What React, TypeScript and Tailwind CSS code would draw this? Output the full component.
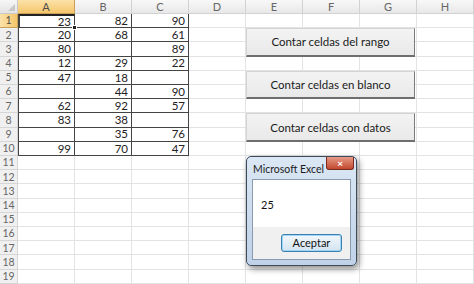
import { Fragment } from "react";

const cols = ["A", "B", "C", "D", "E", "F", "G", "H"];

const data: (number | null)[][] = [
  [23, 82, 90],
  [20, 68, 61],
  [80, null, 89],
  [12, 29, 22],
  [47, 18, null],
  [null, 44, 90],
  [62, 92, 57],
  [83, 38, null],
  [null, 35, 76],
  [99, 70, 47],
];

const buttons = [
  { label: "Contar celdas del rango", row: "row-start-3 row-end-5" },
  { label: "Contar celdas en blanco", row: "row-start-6 row-end-8" },
  { label: "Contar celdas con datos", row: "row-start-9 row-end-11" },
];

const font = { fontFamily: "Lato, 'Open Sans', sans-serif" };

export default function App() {
  const rows = Array.from({ length: 19 }, (_, i) => i + 1);

  return (
    <div className="relative w-[474px] h-[284px] overflow-hidden bg-white" style={font}>
      <div className="grid grid-cols-[18px_repeat(8,57px)] grid-rows-[14px_repeat(19,14.21px)]">
        {/* corner */}
        <div className="col-start-1 row-start-1 bg-gradient-to-b from-[#f6f6f6] to-[#e4e4e4] border-r border-b border-[#c9c9c9] flex items-end justify-end p-[2px]">
          <div className="w-0 h-0 border-l-[7px] border-l-transparent border-b-[7px] border-b-[#c8c8c8]" />
        </div>
        {cols.map((c, ci) => (
          <div
            key={c}
            style={{ gridColumn: ci + 2, gridRow: 1 }}
            className={
              c === "A"
                ? "bg-gradient-to-b from-[#fbe2a8] to-[#f5c66a] border-r border-b border-[#c9a05a] text-[11px] text-[#4c4c4c] flex items-center justify-center leading-none"
                : "bg-gradient-to-b from-[#f8f8f8] to-[#e8e8e8] border-r border-b border-[#d2d2d2] text-[11px] text-[#666] flex items-center justify-center leading-none"
            }
          >
            {c}
          </div>
        ))}

        {rows.map((r) => (
          <Fragment key={r}>
            <div
              style={{ gridColumn: 1, gridRow: r + 1 }}
              className={
                r === 1
                  ? "bg-gradient-to-r from-[#fbe2a8] to-[#f5c66a] border-r border-b border-[#c9a05a] text-[10.5px] text-[#4c4c4c] flex items-center justify-center leading-none"
                  : "bg-[#f0f0f0] border-r border-b border-[#d6d6d6] text-[10.5px] text-[#666] flex items-center justify-center leading-none"
              }
            >
              {r}
            </div>
            {cols.map((c, ci) => {
              const inRange = r <= 10 && ci < 3;
              const v = inRange ? data[r - 1][ci] : null;
              let cls =
                "border-r border-b border-[#e2e3e4] text-[11.5px] text-[#222] flex items-center justify-end pr-[3px] leading-none";
              if (inRange) {
                cls =
                  "border-r border-b border-[#444] text-[11.5px] text-[#222] flex items-center justify-end pr-[3px] leading-none";
                if (ci === 0) cls += " border-l border-l-[#444]";
              }
              if (r === 1 && ci === 0) cls += " relative border-t-2 border-t-[#222] border-l-2 border-l-[#222]";
              return (
                <div key={c} style={{ gridColumn: ci + 2, gridRow: r + 1 }} className={cls}>
                  {v ?? ""}
                  {r === 1 && ci === 0 && (
                    <span className="absolute -right-[3px] -bottom-[3px] w-[5px] h-[5px] bg-[#222] border border-white" />
                  )}
                </div>
              );
            })}
          </Fragment>
        ))}

        {buttons.map((b) => (
          <button
            key={b.label}
            type="button"
            className={`col-start-6 col-end-9 ${b.row} z-10 mr-[2px] bg-gradient-to-b from-[#f3f3f3] to-[#e9e9e9] border border-[#d4d4d4] border-r-[#7a7a7a] border-b-[2px] border-b-[#6e6e6e] text-[11.5px] text-[#1a1a1a] flex items-center justify-center`}
          >
            {b.label}
          </button>
        ))}
      </div>

      {/* MsgBox */}
      <div className="absolute left-[246px] top-[156px] w-[111px] h-[110px] rounded-[5px] border border-[#3d4a5a] bg-gradient-to-b from-[#dbe7f4] to-[#bfd2e8] shadow-[2px_3px_6px_rgba(0,0,0,0.45)] flex flex-col px-[5px] pb-[5px] z-20">
        <div className="h-[22px] flex items-center justify-between gap-[2px]">
          <span className="text-[10.5px] text-[#1b1b1b] pl-[1px] pt-[3px] whitespace-nowrap">Microsoft Excel</span>
          <div className="self-start shrink-0 w-[28px] h-[13px] -mr-[2px] rounded-b-[3px] bg-gradient-to-b from-[#e59a86] to-[#c2452d] border border-[#7a2b1c] border-t-0 flex items-center justify-center text-white text-[10px] font-bold leading-none">
            ×
          </div>
        </div>
        <div className="flex-1 flex flex-col border border-[#8a9bb0]">
          <div className="h-[47px] bg-white flex items-center pl-[8px] pt-[4px] text-[11px] text-[#111]">25</div>
          <div className="flex-1 bg-[#f0f0f0] flex items-center justify-end pr-[8px]">
            <button
              type="button"
              className="w-[61px] h-[18px] rounded-[3px] border border-[#3c7fb1] bg-gradient-to-b from-[#f2f7fb] to-[#d3e4f1] shadow-[inset_0_0_0_1px_#9fd6f5] text-[11px] text-[#111] flex items-center justify-center"
            >
              Aceptar
            </button>
          </div>
        </div>
      </div>
    </div>
  );
}
